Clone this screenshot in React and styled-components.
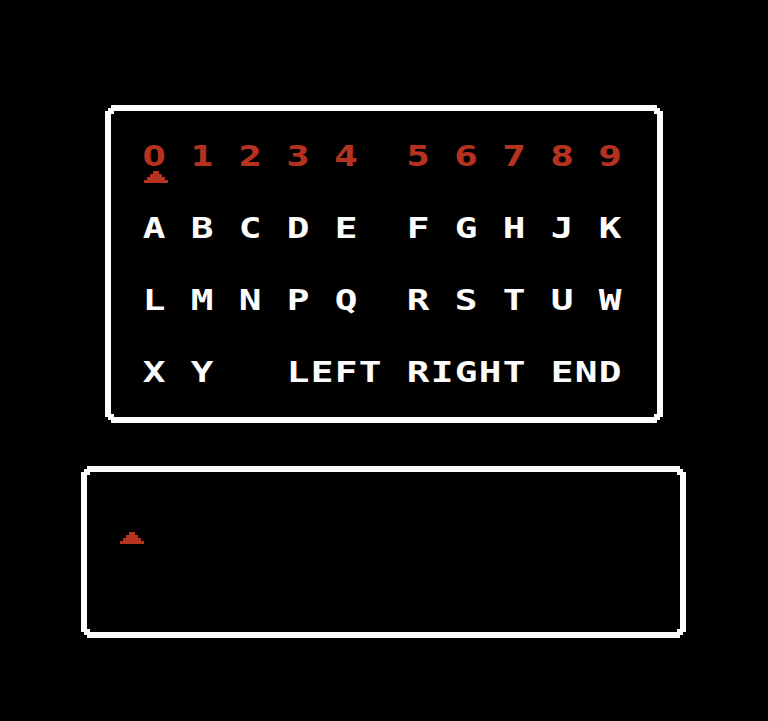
import React from "react";
import styled, { createGlobalStyle } from "styled-components";

const WHITE = "#fcfcfc";
const RED = "#b53120";

const Global = createGlobalStyle`
  html, body {
    margin: 0;
    padding: 0;
    background: #000;
  }
  #root {
    width: 768px;
    height: 721px;
    background: #000;
  }
`;

const Screen = styled.main`
  width: 768px;
  height: 721px;
  display: flex;
  flex-direction: column;
  align-items: flex-start;
  background: #000;
  overflow: hidden;
`;

const Frame = styled.section`
  box-sizing: border-box;
  flex: none;
  margin-left: ${(p) => p.$left}px;
  margin-top: ${(p) => p.$top}px;
  width: ${(p) => p.$w}px;
  height: ${(p) => p.$h}px;
  padding: ${(p) => p.$padTop}px 0 0 ${(p) => p.$padLeft}px;
  border: 6px solid ${WHITE};
  background:
    linear-gradient(${WHITE}, ${WHITE}) left top / 3px 3px no-repeat,
    linear-gradient(${WHITE}, ${WHITE}) right top / 3px 3px no-repeat,
    linear-gradient(${WHITE}, ${WHITE}) left bottom / 3px 3px no-repeat,
    linear-gradient(${WHITE}, ${WHITE}) right bottom / 3px 3px no-repeat,
    #000;
  clip-path: polygon(
    0 6px, 3px 6px, 3px 3px, 6px 3px, 6px 0,
    calc(100% - 6px) 0, calc(100% - 6px) 3px, calc(100% - 3px) 3px, calc(100% - 3px) 6px, 100% 6px,
    100% calc(100% - 6px), calc(100% - 3px) calc(100% - 6px), calc(100% - 3px) calc(100% - 3px), calc(100% - 6px) calc(100% - 3px), calc(100% - 6px) 100%,
    6px 100%, 6px calc(100% - 3px), 3px calc(100% - 3px), 3px calc(100% - 6px), 0 calc(100% - 6px)
  );
`;

const Keyboard = styled.div`
  display: grid;
  grid-template-columns: repeat(20, 24px);
  grid-template-rows: repeat(10, 24px);
`;

const Key = styled.div`
  display: flex;
  grid-column: ${(p) => p.$col} / span ${(p) => p.$span || 1};
  grid-row: ${(p) => p.$row};
  color: ${(p) => p.$color};
`;

const Char = styled.span`
  display: block;
  width: 24px;
  height: 24px;
  text-align: center;
  font-family: ${(p) =>
    p.$digit
      ? `"DejaVu Sans", "Liberation Sans", sans-serif`
      : `"DejaVu Sans Mono", "Liberation Mono", monospace`};
  font-weight: bold;
  font-size: 29px;
  line-height: 24px;
  transform: translateX(-2px) scaleX(${(p) => (p.$digit ? 1.15 : 1.3)});
`;

const PointerBox = styled.svg`
  display: block;
  width: 24px;
  height: 12px;
  margin-top: ${(p) => p.$mt || 0}px;
  grid-column: ${(p) => p.$col || "auto"};
  grid-row: ${(p) => p.$row || "auto"};
`;

const Pointer = (props) => (
  <PointerBox viewBox="0 0 24 12" shapeRendering="crispEdges" {...props}>
    <rect x="9" y="0" width="6" height="3" fill={RED} />
    <rect x="6" y="3" width="12" height="3" fill={RED} />
    <rect x="3" y="6" width="18" height="3" fill={RED} />
    <rect x="0" y="9" width="24" height="3" fill={RED} />
  </PointerBox>
);

const COLS = [1, 3, 5, 7, 9, 12, 14, 16, 18, 20];

const rows = [
  { row: 1, color: RED, items: "0123456789".split("") },
  { row: 4, color: WHITE, items: "ABCDEFGHJK".split("") },
  { row: 7, color: WHITE, items: "LMNPQRSTUW".split("") },
];

const lastRow = [
  { text: "X", col: 1 },
  { text: "Y", col: 3 },
  { text: "LEFT", col: 7 },
  { text: "RIGHT", col: 12 },
  { text: "END", col: 18 },
];

const Label = ({ text, col, row, color }) => (
  <Key $col={col} $row={row} $span={text.length} $color={color}>
    {text.split("").map((c, i) => (
      <Char key={i} $digit={/[0-9]/.test(c)}>
        {c}
      </Char>
    ))}
  </Key>
);

export default function App() {
  return (
    <>
      <Global />
      <Screen>
        <Frame $left={105} $top={105} $w={558} $h={318} $padLeft={33} $padTop={33}>
          <Keyboard>
            {rows.map((r) =>
              r.items.map((t, i) => (
                <Label key={r.row + "-" + i} text={t} col={COLS[i]} row={r.row} color={r.color} />
              ))
            )}
            <Pointer $col={1} $row={2} $mt={3} />
            {lastRow.map((it) => (
              <Label key={it.text} text={it.text} col={it.col} row={10} color={WHITE} />
            ))}
          </Keyboard>
        </Frame>
        <Frame $left={81} $top={43} $w={605} $h={172} $padLeft={33} $padTop={60}>
          <Pointer />
        </Frame>
      </Screen>
    </>
  );
}
